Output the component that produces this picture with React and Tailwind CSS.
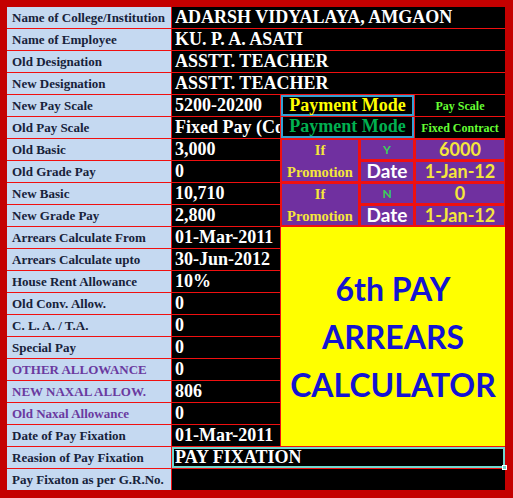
import React from "react";

const Label = ({ children, purple }) => (
  <div
    className={
      "bg-[#c5d9f1] pl-[5px] flex items-center text-[13px] font-bold whitespace-nowrap overflow-hidden " +
      (purple ? "text-[#6a3aa0]" : "text-[#17223a]")
    }
  >
    {children}
  </div>
);

const Val = ({ children, span }) => (
  <div
    className={
      "bg-black text-white pl-[3px] flex items-center text-[18px] font-bold whitespace-nowrap overflow-hidden " +
      (span ? "col-span-4" : "")
    }
  >
    {children}
  </div>
);

export default function App() {
  return (
    <div className="w-[513px] h-[498px] bg-[#c40000] pt-[7px] pl-[7px] pr-[8px] pb-[8px] font-['Liberation_Serif',serif]">
      <div className="grid grid-cols-[164px_108px_78px_54px_90px] grid-rows-[repeat(22,21px)] gap-px bg-[#f01010]">
        <Label>Name of College/Institution</Label>
        <Val span>ADARSH VIDYALAYA, AMGAON</Val>
        <Label>Name of Employee</Label>
        <Val span>KU. P. A. ASATI</Val>
        <Label>Old Designation</Label>
        <Val span>ASSTT. TEACHER</Val>
        <Label>New Designation</Label>
        <Val span>ASSTT. TEACHER</Val>

        <Label>New Pay Scale</Label>
        <Val>5200-20200</Val>
        <div className="col-span-2 bg-black border-2 border-[#35a0d2] flex items-center justify-center text-[18px] font-bold text-[#ffff00] whitespace-nowrap">
          Payment Mode
        </div>
        <div className="bg-black flex items-center justify-center text-[12px] font-bold text-[#66ff33]">
          Pay Scale
        </div>

        <Label>Old Pay Scale</Label>
        <Val>Fixed Pay (Contract)</Val>
        <div className="col-span-2 bg-black border-2 border-t-0 border-[#35a0d2] flex items-center justify-center text-[18px] font-bold text-[#00b050] whitespace-nowrap">
          Payment Mode
        </div>
        <div className="bg-black flex items-center justify-center text-[12px] font-bold text-[#66ff33] whitespace-nowrap">
          Fixed Contract
        </div>

        <Label>Old Basic</Label>
        <Val>3,000</Val>
        <div className="row-span-2 bg-[#7030a0] border border-[#f01010] flex flex-col items-center justify-center text-[14.5px] font-bold text-[#f5e63a] leading-[22px]">
          <span>If</span>
          <span>Promotion</span>
        </div>
        <div className="bg-[#7030a0] border border-[#f01010] flex items-center justify-center text-[12px] font-bold text-[#3ccf5a] font-['Lato',sans-serif]">
          Y
        </div>
        <div className="bg-[#7030a0] border border-[#f01010] flex items-center justify-center text-[18px] font-bold text-[#f5e63a] font-['Lato',sans-serif]">
          6000
        </div>

        <Label>Old Grade Pay</Label>
        <Val>0</Val>
        <div className="bg-[#7030a0] border border-[#f01010] flex items-center justify-center text-[19px] font-bold text-white font-['Lato',sans-serif]">
          Date
        </div>
        <div className="bg-[#7030a0] border border-[#f01010] flex items-center justify-center text-[18px] font-bold text-[#f5e63a] font-['Lato',sans-serif]">
          1-Jan-12
        </div>

        <Label>New Basic</Label>
        <Val>10,710</Val>
        <div className="row-span-2 bg-[#7030a0] border border-[#f01010] flex flex-col items-center justify-center text-[14.5px] font-bold text-[#f5e63a] leading-[22px]">
          <span>If</span>
          <span>Promotion</span>
        </div>
        <div className="bg-[#7030a0] border border-[#f01010] flex items-center justify-center text-[12px] font-bold text-[#3ccf5a] font-['Lato',sans-serif]">
          N
        </div>
        <div className="bg-[#7030a0] border border-[#f01010] flex items-center justify-center text-[18px] font-bold text-[#f5e63a] font-['Lato',sans-serif]">
          0
        </div>

        <Label>New Grade Pay</Label>
        <Val>2,800</Val>
        <div className="bg-[#7030a0] border border-[#f01010] flex items-center justify-center text-[19px] font-bold text-white font-['Lato',sans-serif]">
          Date
        </div>
        <div className="bg-[#7030a0] border border-[#f01010] flex items-center justify-center text-[18px] font-bold text-[#f5e63a] font-['Lato',sans-serif]">
          1-Jan-12
        </div>

        <Label>Arrears Calculate From</Label>
        <Val>01-Mar-2011</Val>
        <div className="col-span-3 row-span-10 bg-[#ffff00] flex flex-col items-center justify-center text-[32px] leading-[48px] font-bold text-[#1414d2] font-['Lato',sans-serif]">
          <span>6th PAY</span>
          <span>ARREARS</span>
          <span>CALCULATOR</span>
        </div>

        <Label>Arrears Calculate upto</Label>
        <Val>30-Jun-2012</Val>
        <Label>House Rent Allowance</Label>
        <Val>10%</Val>
        <Label>Old Conv. Allow.</Label>
        <Val>0</Val>
        <Label>C. L. A. / T.A.</Label>
        <Val>0</Val>
        <Label>Special Pay</Label>
        <Val>0</Val>
        <Label purple>OTHER ALLOWANCE</Label>
        <Val>0</Val>
        <Label purple>NEW NAXAL ALLOW.</Label>
        <Val>806</Val>
        <Label purple>Old Naxal Allowance</Label>
        <Val>0</Val>
        <Label>Date of Pay Fixation</Label>
        <Val>01-Mar-2011</Val>

        <Label>Reasion of Pay Fixation</Label>
        <div className="col-span-4 relative bg-black text-white border-2 border-[#6fd8d0] pl-[1px] flex items-center text-[18px] font-bold whitespace-nowrap">
          PAY FIXATION
          <span className="absolute right-[-4px] bottom-[-4px] w-[5px] h-[5px] bg-[#6fd8d0] border border-white" />
        </div>

        <Label>Pay Fixaton as per G.R.No.</Label>
        <Val span></Val>
      </div>
    </div>
  );
}
